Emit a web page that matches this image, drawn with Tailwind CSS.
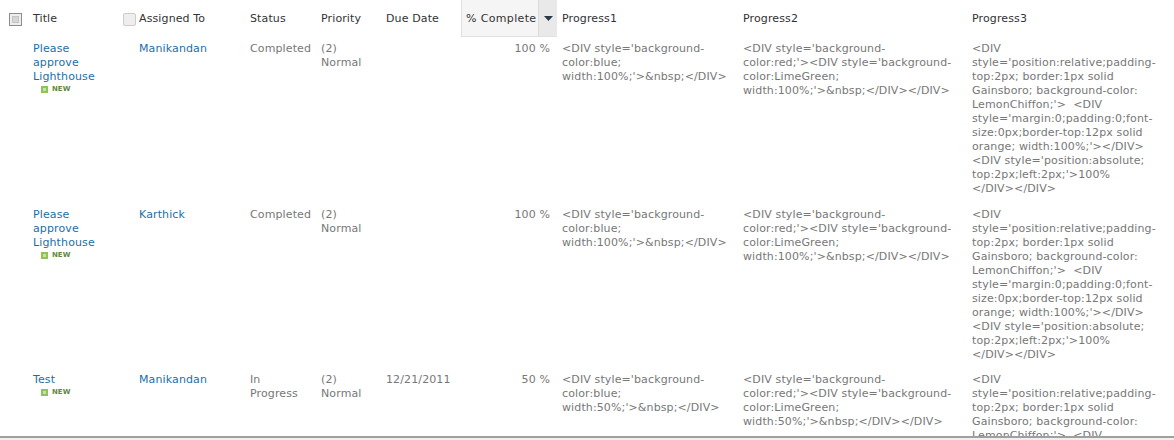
<!DOCTYPE html>
<html lang="en">
<head>
  <meta charset="UTF-8" />
  <title>Tasks</title>
  <script src="https://cdn.jsdelivr.net/npm/@tailwindcss/browser@4"></script>
</head>
<body class="bg-white font-['DejaVu_Sans',sans-serif] text-[11px] leading-[14px] tracking-[0.12px] text-[#777] overflow-hidden">

  <div class="h-[436px] overflow-hidden">
    <table class="table-fixed w-[1174px] border-collapse">
      <colgroup>
        <col class="w-[28px]" /><col class="w-[95px]" /><col class="w-[122px]" /><col class="w-[71px]" /><col class="w-[65px]" /><col class="w-[80px]" /><col class="w-[96px]" /><col class="w-[181px]" /><col class="w-[229px]" /><col class="w-[207px]" />
      </colgroup>

      <!-- header -->
      <thead>
        <tr class="h-[37px] text-[#333]">
          <th class="p-0 font-normal">
            <div class="ml-[9px] mt-[1px] w-[13px] h-[13px] border border-[#8c8c8c] bg-[#eee] p-[2px]"><div class="w-full h-full bg-[#d5d5d5] border border-[#c4c4c4]"></div></div>
          </th>
          <th class="pl-[5px] pt-[1px] font-normal text-left">Title</th>
          <th class="p-0 pt-[1px] font-normal text-left">
            <div class="flex items-center">
              <span class="w-[13px] h-[13px] mr-[3px] border border-[#ccc] bg-[#eee] rounded-[2px]"></span>
              <span>Assigned To</span>
            </div>
          </th>
          <th class="pl-[5px] pt-[1px] font-normal text-left">Status</th>
          <th class="pl-[5px] pt-[1px] font-normal text-left">Priority</th>
          <th class="pl-[5px] pt-[1px] font-normal text-left">Due Date</th>
          <th class="p-0 font-normal text-left">
            <div class="flex h-[37px] bg-[#f5f5f5] border-l border-b border-[#e0e0e0]">
              <span class="flex-1 pl-[4px] pt-[1px] self-center whitespace-nowrap tracking-[0.35px]">% Complete</span>
              <span class="w-[19px] bg-[#e9e9e9] border-l border-[#dcdcdc] flex items-center justify-center">
                <svg width="9" height="5" viewBox="0 0 9 5"><path d="M0 0h9L4.500 5z" fill="#2b3a4a" /></svg>
              </span>
            </div>
          </th>
          <th class="pl-[5px] pt-[1px] font-normal text-left">Progress1</th>
          <th class="pl-[5px] pt-[1px] font-normal text-left">Progress2</th>
          <th class="pl-[5px] pt-[1px] font-normal text-left">Progress3</th>
        </tr>
      </thead>

      <tbody>
        <!-- row 1 -->
        <tr class="h-[166px] align-top">
          <td></td>
          <td class="pl-[5px] pr-[20px] pt-[5px] text-[#1b6fa8]">
            <a href="#">Please approve Lighthouse</a>
            <div class="flex items-center h-[10px] pl-[8px] text-[7px] leading-[8px] font-bold tracking-normal text-[#5f8a3f]"><span class="w-[7px] h-[7px] mr-[4px] bg-[#c5e0a5] border-2 border-[#8fc25c]"></span>NEW</div>
          </td>
          <td class="pl-[16px] pt-[5px] text-[#1b6fa8]"><a href="#">Manikandan</a></td>
          <td class="pl-[5px] pt-[5px]">Completed</td>
          <td class="pl-[5px] pt-[5px]">(2)<br />Normal</td>
          <td class="pl-[5px] pt-[5px]"></td>
          <td class="pr-[7px] pt-[5px] text-right">100 %</td>
          <td class="pl-[5px] pt-[5px] whitespace-nowrap">&lt;DIV style='background-<br />color:blue;<br />width:100%;'&gt;&amp;nbsp;&lt;/DIV&gt;</td>
          <td class="pl-[5px] pt-[5px] whitespace-nowrap">&lt;DIV style='background-<br />color:red;'&gt;&lt;DIV style='background-<br />color:LimeGreen;<br />width:100%;'&gt;&amp;nbsp;&lt;/DIV&gt;&lt;/DIV&gt;</td>
          <td class="pl-[5px] pt-[5px] whitespace-nowrap">&lt;DIV<br />style='position:relative;padding-<br />top:2px; border:1px solid<br />Gainsboro; background-color:<br />LemonChiffon;'&gt; &nbsp;&lt;DIV<br />style='margin:0;padding:0;font-<br />size:0px;border-top:12px solid<br />orange; width:100%;'&gt;&lt;/DIV&gt;<br />&lt;DIV style='position:absolute;<br />top:2px;left:2px;'&gt;100%<br />&lt;/DIV&gt;&lt;/DIV&gt;</td>
        </tr>
        <!-- row 2 -->
        <tr class="h-[165px] align-top">
          <td></td>
          <td class="pl-[5px] pr-[20px] pt-[5px] text-[#1b6fa8]">
            <a href="#">Please approve Lighthouse</a>
            <div class="flex items-center h-[10px] pl-[8px] text-[7px] leading-[8px] font-bold tracking-normal text-[#5f8a3f]"><span class="w-[7px] h-[7px] mr-[4px] bg-[#c5e0a5] border-2 border-[#8fc25c]"></span>NEW</div>
          </td>
          <td class="pl-[16px] pt-[5px] text-[#1b6fa8]"><a href="#">Karthick</a></td>
          <td class="pl-[5px] pt-[5px]">Completed</td>
          <td class="pl-[5px] pt-[5px]">(2)<br />Normal</td>
          <td class="pl-[5px] pt-[5px]"></td>
          <td class="pr-[7px] pt-[5px] text-right">100 %</td>
          <td class="pl-[5px] pt-[5px] whitespace-nowrap">&lt;DIV style='background-<br />color:blue;<br />width:100%;'&gt;&amp;nbsp;&lt;/DIV&gt;</td>
          <td class="pl-[5px] pt-[5px] whitespace-nowrap">&lt;DIV style='background-<br />color:red;'&gt;&lt;DIV style='background-<br />color:LimeGreen;<br />width:100%;'&gt;&amp;nbsp;&lt;/DIV&gt;&lt;/DIV&gt;</td>
          <td class="pl-[5px] pt-[5px] whitespace-nowrap">&lt;DIV<br />style='position:relative;padding-<br />top:2px; border:1px solid<br />Gainsboro; background-color:<br />LemonChiffon;'&gt; &nbsp;&lt;DIV<br />style='margin:0;padding:0;font-<br />size:0px;border-top:12px solid<br />orange; width:100%;'&gt;&lt;/DIV&gt;<br />&lt;DIV style='position:absolute;<br />top:2px;left:2px;'&gt;100%<br />&lt;/DIV&gt;&lt;/DIV&gt;</td>
        </tr>
        <!-- row 3 -->
        <tr class="h-[165px] align-top">
          <td></td>
          <td class="pl-[5px] pr-[20px] pt-[5px] text-[#1b6fa8]">
            <a href="#">Test</a>
            <div class="flex items-center h-[10px] pl-[8px] text-[7px] leading-[8px] font-bold tracking-normal text-[#5f8a3f]"><span class="w-[7px] h-[7px] mr-[4px] bg-[#c5e0a5] border-2 border-[#8fc25c]"></span>NEW</div>
          </td>
          <td class="pl-[16px] pt-[5px] text-[#1b6fa8]"><a href="#">Manikandan</a></td>
          <td class="pl-[5px] pt-[5px]">In<br />Progress</td>
          <td class="pl-[5px] pt-[5px]">(2)<br />Normal</td>
          <td class="pl-[5px] pt-[5px]">12/21/2011</td>
          <td class="pr-[7px] pt-[5px] text-right">50 %</td>
          <td class="pl-[5px] pt-[5px] whitespace-nowrap">&lt;DIV style='background-<br />color:blue;<br />width:50%;'&gt;&amp;nbsp;&lt;/DIV&gt;</td>
          <td class="pl-[5px] pt-[5px] whitespace-nowrap">&lt;DIV style='background-<br />color:red;'&gt;&lt;DIV style='background-<br />color:LimeGreen;<br />width:50%;'&gt;&amp;nbsp;&lt;/DIV&gt;&lt;/DIV&gt;</td>
          <td class="pl-[5px] pt-[5px] whitespace-nowrap">&lt;DIV<br />style='position:relative;padding-<br />top:2px; border:1px solid<br />Gainsboro; background-color:<br />LemonChiffon;'&gt; &nbsp;&lt;DIV</td>
        </tr>
      </tbody>
    </table>
  </div>

  <!-- window edge -->
  <div class="h-[4px] border-t-2 border-[#a0a0a0] bg-[#f0f0f0]"></div>

</body>
</html>
